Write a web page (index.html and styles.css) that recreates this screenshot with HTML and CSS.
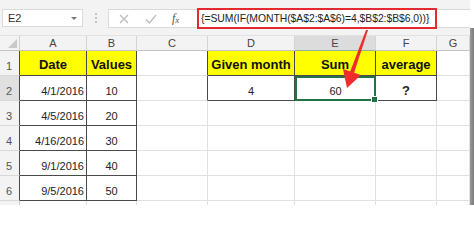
FILE: index.html
```html
<!DOCTYPE html>
<html>
<head>
<meta charset="utf-8">
<link rel="stylesheet" href="styles.css">
</head>
<body>
<div class="app">
  <div class="toolbar">
    <div class="namebox"><span>E2</span><span class="caret"></span></div>
    <div class="grip"><i></i><i></i><i></i></div>
    <div class="fbar">
      <div class="ficons">
        <svg class="ico" width="12" height="12" viewBox="0 0 12 12"><path d="M2 2L10 10M10 2L2 10" stroke="#bdbdbd" stroke-width="1.3" fill="none"/></svg>
        <svg class="ico" width="14" height="12" viewBox="0 0 14 12"><path d="M2 6.5L5.5 10L12 2" stroke="#bdbdbd" stroke-width="1.3" fill="none"/></svg>
        <span class="fx">f<span class="fxx">x</span></span>
      </div>
      <div class="formula">{=SUM(IF(MONTH($A$2:$A$6)=4,$B$2:$B$6,0))}</div>
    </div>
  </div>
  <div class="sheet">
    <div class="corner"></div>
    <div class="ch">A</div><div class="ch">B</div><div class="ch">C</div><div class="ch">D</div><div class="ch sel">E</div><div class="ch">F</div><div class="ch">G</div>

    <div class="rh dk">1</div>
    <div class="c hd y dk">Date</div><div class="c hd y dk">Values</div><div class="c rdk"></div>
    <div class="c hd y dk">Given month</div><div class="c hd y dk">Sum</div><div class="c hd y dk">average</div><div class="c"></div>

    <div class="rh dk rsel">2</div>
    <div class="c r dk">4/1/2016</div><div class="c m dk">10</div><div class="c rdk"></div>
    <div class="c m dk">4</div><div class="c m dk active">60</div><div class="c m dk q">?</div><div class="c"></div>

    <div class="rh dk">3</div>
    <div class="c r dk">4/5/2016</div><div class="c m dk">20</div><div class="c"></div>
    <div class="c"></div><div class="c"></div><div class="c"></div><div class="c"></div>

    <div class="rh dk">4</div>
    <div class="c r dk">4/16/2016</div><div class="c m dk">30</div><div class="c"></div>
    <div class="c"></div><div class="c"></div><div class="c"></div><div class="c"></div>

    <div class="rh dk">5</div>
    <div class="c r dk">9/1/2016</div><div class="c m dk">40</div><div class="c"></div>
    <div class="c"></div><div class="c"></div><div class="c"></div><div class="c"></div>

    <div class="rh dk">6</div>
    <div class="c r dk">9/5/2016</div><div class="c m dk">50</div><div class="c"></div>
    <div class="c"></div><div class="c"></div><div class="c"></div><div class="c"></div>

    <div class="rh">7</div>
    <div class="c"></div><div class="c"></div><div class="c"></div>
    <div class="c"></div><div class="c"></div><div class="c"></div><div class="c"></div>
  </div>
  <svg class="arrow" width="470" height="205" viewBox="0 0 470 205">
    <polygon points="366,30 368,30 354,73 350,72" fill="#ee2c2c"/>
    <polygon points="343,69 361,75 347,88" fill="#ee2c2c"/>
  </svg>
</div>
</body>
</html>
```

FILE: styles.css
```css
html, body {
  margin: 0;
  padding: 0;
  background: #ffffff;
}
.app {
  position: relative;
  width: 470px;
  height: 205px;
  overflow: visible;
  font-family: "Liberation Sans", Arial, sans-serif;
}
.app::after {
  content: "";
  position: absolute;
  left: 28px;
  top: 205px;
  width: 446px;
  height: 4px;
  background: linear-gradient(#9a9a9a, #7a7a7a);
}
.app::before {
  content: "";
  position: absolute;
  left: 470px;
  top: 28px;
  width: 4px;
  height: 177px;
  background: linear-gradient(90deg, #9a9a9a, #7a7a7a);
}
.toolbar {
  height: 36px;
  background: #f3f3f3;
  display: flex;
  align-items: flex-start;
  box-sizing: border-box;
  padding-top: 9px;
  border-bottom: 1px solid #e2e2e2;
}
.namebox {
  margin-left: 2px;
  width: 81px;
  height: 18px;
  box-sizing: border-box;
  background: #fff;
  border: 1px solid #dadada;
  display: flex;
  align-items: center;
  justify-content: space-between;
  padding: 0 4px 0 5px;
  font-size: 11px;
  color: #333;
}
.caret {
  width: 0;
  height: 0;
  border-left: 3px solid transparent;
  border-right: 3px solid transparent;
  border-top: 3px solid #777;
  margin-right: 1px;
}
.grip {
  width: 25px;
  height: 18px;
  display: flex;
  flex-direction: column;
  align-items: center;
  justify-content: center;
  gap: 2px;
}
.grip i {
  display: block;
  width: 2px;
  height: 2px;
  background: #c4c4c4;
}
.fbar {
  flex: 1;
  height: 19px;
  box-sizing: border-box;
  background: #fff;
  border: 1px solid #dadada;
  border-right: none;
  display: flex;
  align-items: center;
}
.ficons {
  width: 88px;
  display: flex;
  align-items: center;
  padding-left: 9px;
  box-sizing: border-box;
  gap: 14px;
}
.ico {
  display: block;
}
.fx {
  font-family: "Liberation Serif", serif;
  font-style: italic;
  font-size: 12px;
  color: #555;
  margin-left: 0px;
}
.fxx {
  font-size: 9px;
  position: relative;
  top: 1px;
}
.formula {
  width: 240px;
  height: 21px;
  box-sizing: border-box;
  border: 2px solid #e42a30;
  font-size: 10.4px;
  color: #222;
  display: flex;
  align-items: center;
  padding-left: 2px;
  white-space: nowrap;
  overflow: hidden;
  letter-spacing: -0.05px;
}
.sheet {
  display: grid;
  grid-template-columns: 20px 67px 50px 71px 87px 81px 61px 33px;
  grid-template-rows: 15px 25px 25px 25px 25px 25px 25px 25px;
  height: 169px;
  overflow: hidden;
}
.corner {
  background: #f3f3f3;
  border-right: 1px solid #d0d0d0;
  border-bottom: 1px solid #c4c4c4;
  box-sizing: border-box;
  position: relative;
}
.corner::after {
  content: "";
  position: absolute;
  right: 2px;
  bottom: 2px;
  width: 0;
  height: 0;
  border-left: 9px solid transparent;
  border-bottom: 9px solid #c9c9c9;
}
.ch {
  background: #f3f3f3;
  border-right: 1px solid #d4d4d4;
  border-bottom: 1px solid #c4c4c4;
  box-sizing: border-box;
  font-size: 11px;
  color: #444;
  display: flex;
  align-items: center;
  justify-content: center;
}
.ch.sel {
  background: #dcdcdc;
  border-bottom: 1px solid #8fb49c;
}
.rh {
  background: #f3f3f3;
  border-right: 1px solid #c8c8c8;
  border-bottom: 1px solid #d8d8d8;
  box-sizing: border-box;
  font-size: 11px;
  color: #555;
  display: flex;
  align-items: flex-end;
  padding-left: 6px;
  padding-bottom: 3px;
}
.rh.dk {
  border-right: 1px solid #4a4a4a;
}
.rh.rsel {
  background: #e0e0e0;
}
.c {
  border-right: 1px solid #e0e0e0;
  border-bottom: 1px solid #e0e0e0;
  box-sizing: border-box;
  font-size: 11px;
  color: #222;
  display: flex;
  align-items: flex-end;
  padding-bottom: 3px;
  white-space: nowrap;
}
.c.dk {
  border-right: 1px solid #4a4a4a;
  border-bottom: 1px solid #4a4a4a;
}
.c.rdk {
  border-right: 1px solid #4a4a4a;
}
.c.y {
  background: #ffff00;
}
.c.hd {
  font-weight: bold;
  font-size: 13px;
  color: #111;
  justify-content: center;
  padding-bottom: 3px;
}
.c.r {
  justify-content: flex-end;
  padding-right: 2px;
}
.c.m {
  justify-content: center;
}
.c.q {
  font-weight: bold;
  font-size: 13px;
  padding-bottom: 2px;
}
.c.active {
  position: relative;
  border: 2px solid #217346;
  padding-bottom: 2px;
}
.c.active::after {
  content: "";
  position: absolute;
  right: -4px;
  bottom: -4px;
  width: 5px;
  height: 5px;
  background: #217346;
  border: 1px solid #fff;
}
.arrow {
  position: absolute;
  left: 0;
  top: 0;
  pointer-events: none;
}
```
